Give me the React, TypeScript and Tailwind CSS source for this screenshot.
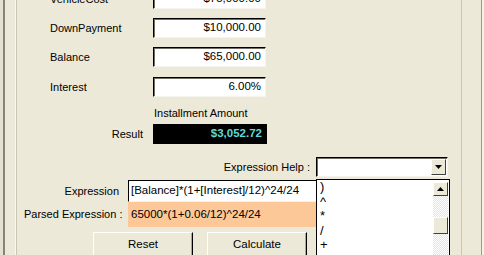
import React from 'react'

const font = { fontFamily: '"Liberation Sans", Tahoma, Arial, sans-serif' }

const fields = [
  { label: 'VehicleCost', value: '$75,000.00', mt: 'mt-[-11px]' },
  { label: 'DownPayment', value: '$10,000.00', mt: 'mt-[9px]' },
  { label: 'Balance', value: '$65,000.00', mt: 'mt-[9px]' },
  { label: 'Interest', value: '6.00%', mt: 'mt-[10px]' },
]

const helpItems = [')', '^', '*', '/', '+']

function Field({ label, value, mt }: { label: string; value: string; mt: string }) {
  return (
    <div className={`shrink-0 flex items-center h-[20px] ${mt}`}>
      <div className="w-[135px] pl-[32px] pt-[1px]">{label}</div>
      <div className="w-[113px] h-full bg-white border border-t-black border-l-black border-r-[#f4f3ee] border-b-[#f4f3ee] shadow-[inset_1px_1px_0_#6f6d66] flex items-center justify-end pr-[4px] text-[11.5px]">
        {value}
      </div>
    </div>
  )
}

function Button({ children }: { children: React.ReactNode }) {
  return (
    <div className="w-[100px] h-[30px] bg-[#ECE9D8] border border-t-white border-l-white border-r-black border-b-black shadow-[inset_-1px_-1px_0_#aca899] flex items-center justify-center pb-[4px] text-[11.5px]">
      {children}
    </div>
  )
}

export default function App() {
  return (
    <div
      className="relative w-[484px] h-[255px] overflow-hidden bg-[#ECE9D8] text-[11px] text-black flex"
      style={font}
    >
      {/* left frame */}
      <div className="w-[18px] flex shrink-0">
        <div className="w-[3px] bg-[#e4e1d0]" />
        <div className="w-[2px] bg-[#85837a]" />
        <div className="w-[10px]" />
        <div className="w-[1px] bg-[#f8f7f0]" />
        <div className="w-[1px] bg-[#c9c6b6]" />
      </div>

      {/* form */}
      <div className="w-[443px] shrink-0 flex flex-col">
        {fields.map((f) => (
          <Field key={f.label} {...f} />
        ))}

        <div className="shrink-0 mt-[9px] h-[14px] leading-[14px] pl-[136px]">Installment Amount</div>

        <div className="shrink-0 mt-[4px] flex items-center h-[20px]">
          <div className="w-[135px] text-right pr-[10px]">Result</div>
          <div className="w-[114px] h-full bg-black flex items-center justify-end pr-[5px] font-bold text-[11.5px] text-[#5fd8da]">
            $3,052.72
          </div>
        </div>

        <div className="shrink-0 mt-[13px] flex items-center h-[20px]">
          <div className="w-[298px] text-right pr-[6px]">Expression Help :</div>
          <div className="w-[132px] h-full bg-white border border-t-black border-l-black border-r-[#f4f3ee] border-b-[#f4f3ee] shadow-[inset_1px_1px_0_#6f6d66] flex justify-end items-stretch p-[1px]">
            <div className="w-[15px] bg-[#ECE9D8] border border-t-white border-l-white border-r-[#404040] border-b-[#404040] flex items-center justify-center">
              <svg width="7" height="4" viewBox="0 0 7 4">
                <path d="M0 0h7L3.5 4z" fill="#000" />
              </svg>
            </div>
          </div>
        </div>

        <div className="shrink-0 mt-[3px] flex items-center h-[22px]">
          <div className="w-[110px] text-right pr-[9px]">Expression</div>
          <div className="w-[319px] h-full bg-white border border-t-black border-l-black border-r-[#f4f3ee] border-b-[#f4f3ee] flex items-center pl-[2px] text-[11.5px]">
            [Balance]*(1+[Interest]/12)^24/24
          </div>
        </div>

        <div className="shrink-0 flex items-center h-[25px]">
          <div className="w-[110px] pl-[6px] whitespace-nowrap">Parsed Expression :</div>
          <div className="w-[319px] h-full bg-[#fdc898] flex items-center pl-[3px] text-[11.5px]">
            65000*(1+0.06/12)^24/24
          </div>
        </div>

        <div className="shrink-0 mt-[5px] flex gap-[14px] pl-[75px]">
          <Button>Reset</Button>
          <Button>Calculate</Button>
        </div>
      </div>

      {/* right frame */}
      <div className="flex-1 flex">
        <div className="w-[1px] bg-[#c8c5b4]" />
        <div className="w-[19px]" />
        <div className="w-[1px] bg-[#9e9b8d]" />
        <div className="flex-1 bg-[#f3f1e6]" />
      </div>

      {/* open dropdown list */}
      <div className="absolute left-[316px] top-[179px] w-[134px] h-[90px] bg-white border border-black flex">
        <div className="flex-1 pl-[3px] flex flex-col">
          {helpItems.map((item) => (
            <div key={item} className="h-[14.5px] leading-[14.5px] text-[13px]">
              {item}
            </div>
          ))}
        </div>
        <div className="w-[15px] my-[2px] mr-[1px] flex flex-col bg-[repeating-conic-gradient(#ffffff_0_25%,#e7e4d4_0_50%)] bg-[length:2px_2px]">
          <div className="h-[14px] bg-[#ECE9D8] border border-t-white border-l-white border-r-[#404040] border-b-[#404040] flex items-center justify-center">
            <svg width="7" height="4" viewBox="0 0 7 4">
              <path d="M3.5 0L7 4H0z" fill="#000" />
            </svg>
          </div>
          <div className="mt-[21px] h-[17px] bg-[#ECE9D8] border border-t-white border-l-white border-r-[#404040] border-b-[#404040]" />
        </div>
      </div>
    </div>
  )
}
